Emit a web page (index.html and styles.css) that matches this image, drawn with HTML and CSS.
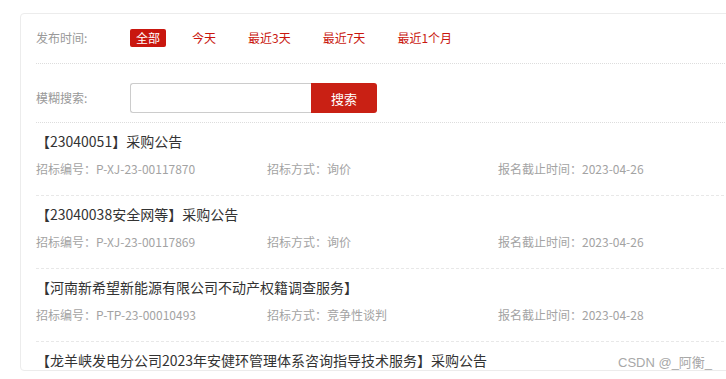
FILE: index.html
```html
<!DOCTYPE html>
<html lang="zh-CN">
<head>
<meta charset="utf-8">
<title>招标公告</title>
<link rel="stylesheet" href="styles.css">
</head>
<body>
<div class="card">
  <div class="filter-row time-row">
    <span class="filter-label">发布时间:</span>
    <div class="options">
      <a class="opt active">全部</a>
      <a class="opt">今天</a>
      <a class="opt">最近3天</a>
      <a class="opt">最近7天</a>
      <a class="opt">最近1个月</a>
    </div>
  </div>
  <div class="filter-row search-row">
    <span class="filter-label">模糊搜索:</span>
    <div class="search">
      <input class="search-input" type="text">
      <button class="search-btn">搜索</button>
    </div>
  </div>
  <ul class="list">
    <li class="item">
      <div class="title">【23040051】采购公告</div>
      <div class="meta"><span class="col">招标编号：P-XJ-23-00117870</span><span class="col">招标方式：询价</span><span class="col">报名截止时间：2023-04-26</span></div>
    </li>
    <li class="item">
      <div class="title">【23040038安全网等】采购公告</div>
      <div class="meta"><span class="col">招标编号：P-XJ-23-00117869</span><span class="col">招标方式：询价</span><span class="col">报名截止时间：2023-04-26</span></div>
    </li>
    <li class="item">
      <div class="title">【河南新希望新能源有限公司不动产权籍调查服务】</div>
      <div class="meta"><span class="col">招标编号：P-TP-23-00010493</span><span class="col">招标方式：竞争性谈判</span><span class="col">报名截止时间：2023-04-28</span></div>
    </li>
    <li class="item last">
      <div class="title">【龙羊峡发电分公司2023年安健环管理体系咨询指导技术服务】采购公告</div>
    </li>
  </ul>
</div>
<div class="watermark">CSDN @_阿衡_</div>
</body>
</html>
```

FILE: styles.css
```css
html, body {
  margin: 0;
  padding: 0;
  overflow: hidden;
  background: #fff;
}
body {
  font-family: "Noto Sans CJK SC", "Noto Sans", sans-serif;
  font-size: 12px;
  color: #333;
  width: 726px;
  height: 379px;
  position: relative;
}
.card {
  margin: 13px 0 0 20px;
  width: 740px;
  border: 1px solid #ececec;
  border-radius: 4px;
  padding: 0 0 0 15px;
  box-sizing: border-box;
}
.filter-row {
  display: flex;
  align-items: center;
}
.time-row {
  padding: 15px 0 16px;
  border-bottom: 1px dotted #ddd;
}
.search-row {
  padding: 19px 0 9px;
  border-bottom: 1px dotted #ddd;
}
.filter-label {
  width: 94px;
  color: #999;
  font-size: 12px;
  line-height: 18px;
}
.options {
  display: flex;
  align-items: center;
}
.opt {
  display: block;
  padding: 0 6px;
  margin-right: 20px;
  line-height: 18px;
  height: 18px;
  font-size: 12px;
  color: #c9170f;
  border-radius: 2px;
  cursor: pointer;
}
.opt.active {
  background: #c9170f;
  color: #fff;
}
.search {
  display: flex;
}
.search-input {
  width: 181px;
  height: 30px;
  box-sizing: border-box;
  border: 1px solid #ccc;
  border-right: none;
  border-radius: 3px 0 0 3px;
  margin: 0;
  padding: 0 8px;
  outline: none;
}
.search-btn {
  width: 66px;
  height: 30px;
  border: none;
  margin: 0;
  background: #c92014;
  color: #fff;
  font-family: "Noto Sans CJK SC", sans-serif;
  font-size: 13px;
  border-radius: 0 3px 3px 0;
  cursor: pointer;
}
.list {
  list-style: none;
  margin: 0;
  padding: 0;
}
.item {
  padding: 8px 0 16px;
  border-bottom: 1px dashed #e8e8e8;
}
.item.last {
  border-bottom: none;
  padding-bottom: 0;
}
.title {
  font-size: 14px;
  line-height: 20px;
  color: #333;
}
.meta {
  display: flex;
  margin-top: 8px;
  line-height: 20px;
  font-size: 12px;
  color: #a3a3a3;
}
.col {
  width: 231px;
  flex: none;
}
.watermark {
  position: absolute;
  left: 618px;
  top: 353px;
  font-family: "Liberation Sans", "Noto Sans CJK SC", sans-serif;
  font-size: 13px;
  line-height: 20px;
  color: #a8a8a8;
}
```
